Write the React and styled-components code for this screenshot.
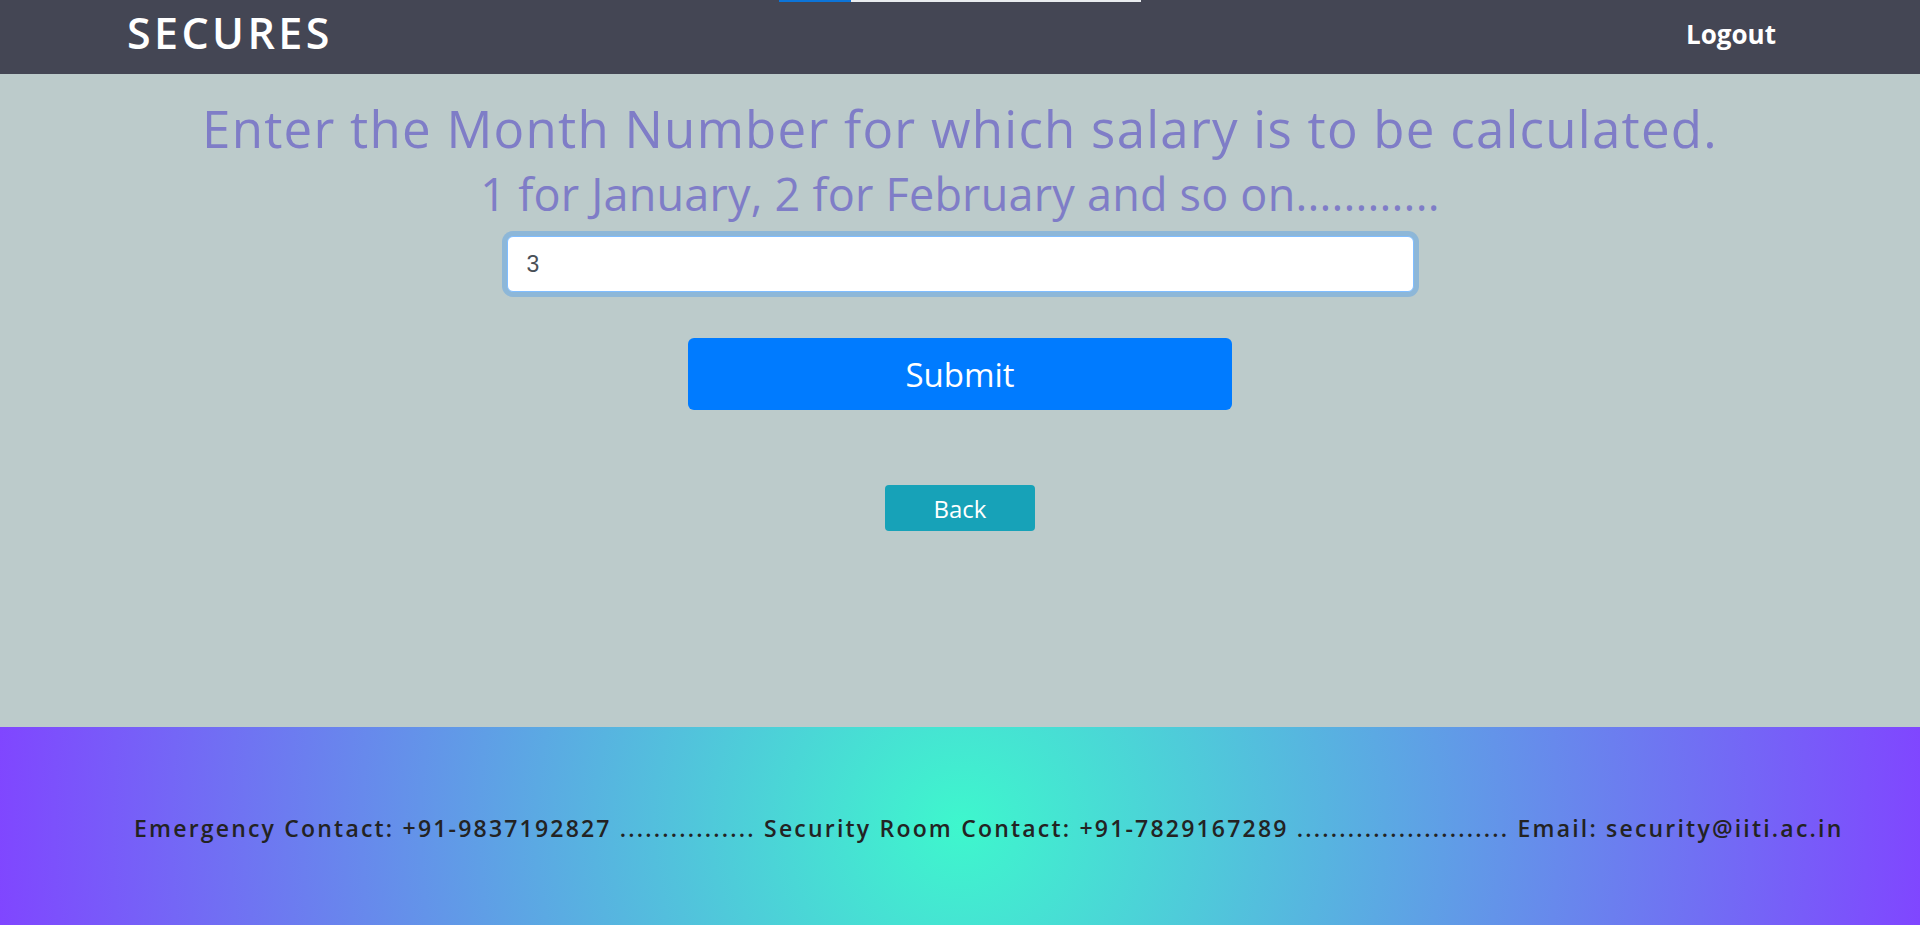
import React from "react";
import styled, { createGlobalStyle } from "styled-components";

const GlobalStyle = createGlobalStyle`
  html, body { margin: 0; padding: 0; }
  body {
    font-family: "Open Sans", "Noto Sans", sans-serif;
    background: #bccbcb;
  }
  * { box-sizing: border-box; }
`;

const Page = styled.div`
  display: flex;
  flex-direction: column;
  min-height: 100vh;
`;

const NavBar = styled.header`
  position: relative;
  height: 74px;
  background: #444654;
  display: flex;
  align-items: center;
  justify-content: space-between;
  padding: 0 144px 6px 127px;
`;

const Brand = styled.a`
  font-size: 43px;
  line-height: 50px;
  font-weight: 600;
  letter-spacing: 3.4px;
  color: #ffffff;
  margin-bottom: 3px;
  text-decoration: none;
`;

const NavLink = styled.a`
  font-size: 26px;
  line-height: 30px;
  font-weight: 700;
  color: #ffffff;
  text-decoration: none;
`;

const LoadBar = styled.div`
  position: absolute;
  top: 0;
  left: 50%;
  transform: translateX(-50%);
  width: 362px;
  height: 2px;
  background: #e9ecef;
  display: flex;
`;

const LoadFill = styled.div`
  height: 100%;
  background: #0c74d8;
`;

const Main = styled.main`
  height: 653px;
  display: flex;
  flex-direction: column;
  align-items: center;
`;

const Title = styled.h1`
  margin: 24px 0 0;
  font-size: 51px;
  line-height: 60px;
  font-weight: 400;
  letter-spacing: 1.25px;
  color: #7f7dc7;
  white-space: nowrap;
`;

const SubTitle = styled.h2`
  margin: 10px 0 0;
  font-size: 45px;
  line-height: 52px;
  font-weight: 400;
  letter-spacing: 0.2px;
  color: #7f7dc7;
  white-space: nowrap;
`;

const MonthInput = styled.input`
  margin-top: 16px;
  width: 907px;
  height: 56px;
  border: 1px solid #80bdff;
  border-radius: 6px;
  box-shadow: 0 0 0 5px rgba(0, 123, 255, 0.25);
  padding: 0 19px;
  font-family: "Liberation Sans", Arial, sans-serif;
  font-size: 23px;
  color: #495057;
  background: #ffffff;
  outline: none;
`;

const Button = styled.button`
  border: none;
  color: #ffffff;
  font-family: "Open Sans", sans-serif;
  font-weight: 400;
  cursor: pointer;
  display: flex;
  align-items: center;
  justify-content: center;
  padding: 0;
  width: ${(p) => p.$w}px;
  height: ${(p) => p.$h}px;
  margin-top: ${(p) => p.$top}px;
  font-size: ${(p) => p.$fs}px;
  background: ${(p) => p.$bg};
  border-radius: ${(p) => p.$r}px;
`;

const Footer = styled.footer`
  height: 198px;
  display: flex;
  align-items: center;
  padding: 4px 0 0 134px;
  background: radial-gradient(circle at 50% 50%, #3ef7cd 0%, #8046ff 100%);
`;

const FooterText = styled.p`
  margin: 0;
  font-size: 23px;
  line-height: 30px;
  font-weight: 600;
  letter-spacing: 2.2px;
  color: #232323;
  white-space: nowrap;
`;

export default function App() {
  return (
    <Page>
      <GlobalStyle />
      <NavBar>
        <Brand href="#">SECURES</Brand>
        <LoadBar>
          <LoadFill style={{ width: "20%" }} />
        </LoadBar>
        <NavLink href="#">Logout</NavLink>
      </NavBar>
      <Main>
        <Title>Enter the Month Number for which salary is to be calculated.</Title>
        <SubTitle>1 for January, 2 for February and so on............</SubTitle>
        <MonthInput type="text" defaultValue="3" />
        <Button $w={544} $h={72} $top={46} $fs={33} $bg="#007bff" $r={6}>
          Submit
        </Button>
        <Button $w={150} $h={46} $top={75} $fs={24} $bg="#17a2b8" $r={4}>
          Back
        </Button>
      </Main>
      <Footer>
        <FooterText>
          Emergency Contact: +91-9837192827 ................ Security Room Contact: +91-7829167289 ......................... Email: security@iiti.ac.in
        </FooterText>
      </Footer>
    </Page>
  );
}
